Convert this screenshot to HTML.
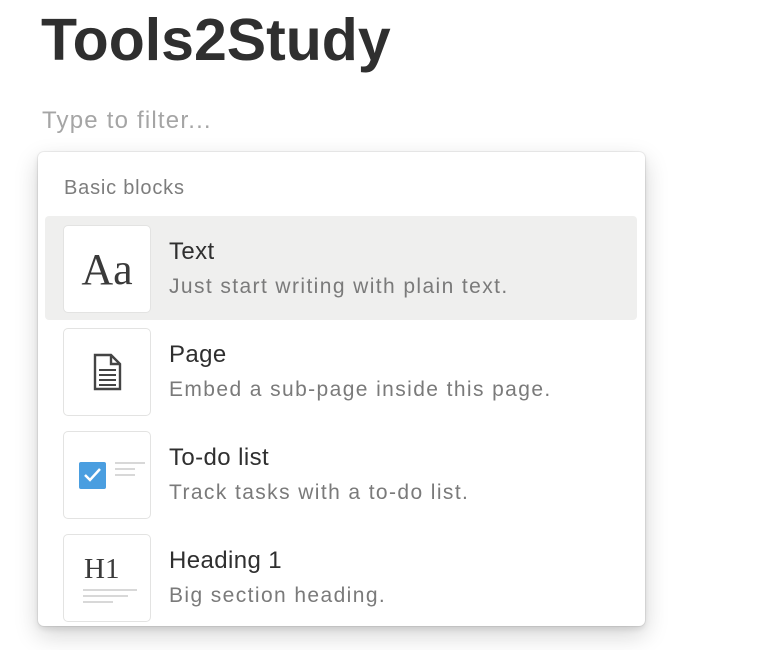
<!DOCTYPE html>
<html><head><style>
body{margin:0;width:768px;height:650px;background:#fff;font-family:"Liberation Sans",sans-serif;position:relative;overflow:hidden}
.t{position:absolute;left:41px;top:6px;font-size:59px;font-weight:bold;color:#2f2f2f;letter-spacing:0px}
.f{position:absolute;left:42px;top:107px;font-size:24px;color:#a5a5a5;letter-spacing:1.2px}
.p{position:absolute;left:38px;top:152px;width:607px;height:474px;border-radius:6px;background:#fff;box-shadow:0 0 0 1px rgba(15,15,15,.06),0 3px 6px rgba(15,15,15,.1),0 9px 24px rgba(15,15,15,.18)}
.h{position:absolute;left:26px;top:25px;font-size:20px;color:#7d7d7d;letter-spacing:.8px}
.hl{position:absolute;left:7px;top:64px;width:592px;height:104px;background:#efefee;border-radius:4px}
.r{position:absolute;left:25px;width:600px;height:88px}
.ic{position:absolute;left:0;top:0;width:86px;height:86px;border:1px solid #e3e3e2;border-radius:5px;background:#fff}
.n{position:absolute;left:106px;top:13px;font-size:24px;color:#2f2f2f;letter-spacing:.4px}
.d{position:absolute;left:106px;top:50px;font-size:21px;color:#7a7a7a;letter-spacing:1.4px}
</style></head><body>
<div class="t">Tools2Study</div>
<div class="f">Type to filter...</div>
<div class="p">
<div class="h">Basic blocks</div>
<div class="hl"></div>
<div class="r" style="top:73px"><div class="ic"><div style="position:absolute;left:0;width:86px;top:18px;text-align:center;font-family:'Liberation Serif',serif;font-size:44px;color:#3a3a3a">Aa</div></div><div class="n">Text</div><div class="d">Just start writing with plain text.</div></div>
<div class="r" style="top:176px"><div class="ic"><svg width="86" height="86" viewBox="0 0 86 86"><path d="M31 26h16l9 9v25H31z M47 26v9h9" fill="none" stroke="#444" stroke-width="2.4"/><path d="M35 41h17M35 46h17M35 51h17M35 56h17" stroke="#444" stroke-width="2"/></svg></div><div class="n">Page</div><div class="d">Embed a sub-page inside this page.</div></div>
<div class="r" style="top:279px"><div class="ic"><svg width="86" height="86" viewBox="0 0 86 86"><rect x="15" y="30" width="27" height="27" rx="2" fill="#4a9ee0"/><path d="M21 43l5 5 10-11" fill="none" stroke="#fff" stroke-width="2.5"/><path d="M51 31h30M51 37h20M51 43h20" stroke="#ccc" stroke-width="1.5"/></svg></div><div class="n">To-do list</div><div class="d">Track tasks with a to-do list.</div></div>
<div class="r" style="top:382px"><div class="ic"><div style="position:absolute;left:20px;top:18px;font-family:'Liberation Serif',serif;font-size:29px;color:#3a3a3a">H1</div><svg width="86" height="86" viewBox="0 0 86 86" style="position:absolute;left:0;top:0"><path d="M19 55h54M19 61h45M19 67h30" stroke="#ccc" stroke-width="1.5"/></svg></div><div class="n">Heading 1</div><div class="d">Big section heading.</div></div>
</div>
</body></html>
